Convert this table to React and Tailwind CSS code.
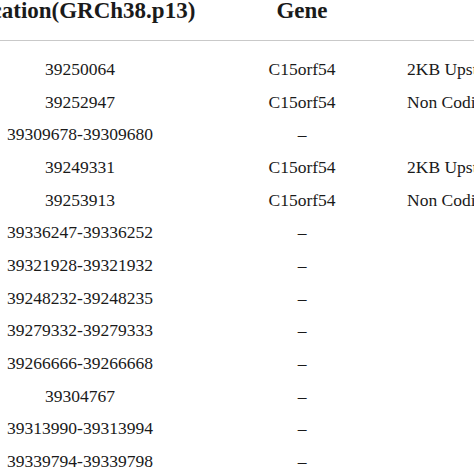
const rows = [
    ["39250064", "C15orf54", "2KB Upstream Variant"],
    ["39252947", "C15orf54", "Non Coding Transcript Variant"],
    ["39309678-39309680", "–", ""],
    ["39249331", "C15orf54", "2KB Upstream Variant"],
    ["39253913", "C15orf54", "Non Coding Transcript Variant"],
    ["39336247-39336252", "–", ""],
    ["39321928-39321932", "–", ""],
    ["39248232-39248235", "–", ""],
    ["39279332-39279333", "–", ""],
    ["39266666-39266668", "–", ""],
    ["39304767", "–", ""],
    ["39313990-39313994", "–", ""],
    ["39339794-39339798", "–", ""],
];

export default function App() {
    return (
        <div className="w-[474px] h-[474px] overflow-hidden bg-white text-[#1a1a1a] font-['Liberation_Serif',serif]">
            <div className="grid grid-cols-[160px_244px_1fr] h-[41px] border-b border-[#c9c9c9] text-[23px] leading-[22px] font-bold">
                <div className="flex justify-center whitespace-nowrap">Location(GRCh38.p13)</div>
                <div className="flex justify-center pl-[40px] whitespace-nowrap">Gene</div>
                <div className="pl-[3px] whitespace-nowrap"></div>
            </div>

            <div className="pt-[12px]">
                {rows.map(([loc, gene, effect], i) => (
                    <div key={i} className="grid grid-cols-[160px_244px_1fr] h-[32.67px] text-[17.5px] leading-[32.67px]">
                        <div className="flex justify-center whitespace-nowrap">{loc}</div>
                        <div className="flex justify-center pl-[40px] whitespace-nowrap">{gene}</div>
                        <div className="pl-[3px] whitespace-nowrap overflow-hidden">{effect}</div>
                    </div>
                ))}
            </div>
        </div>
    );
}
